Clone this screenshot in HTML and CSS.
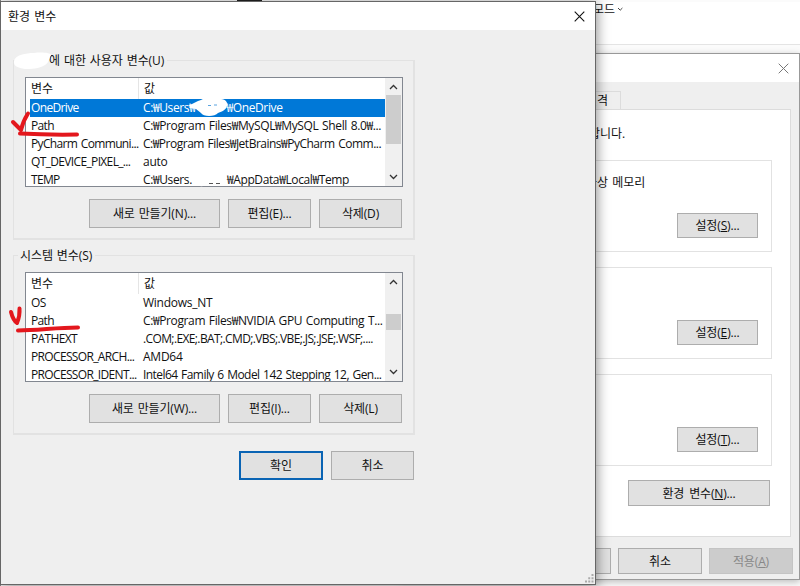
FILE: index.html
```
<!DOCTYPE html>
<html lang="ko">
<head>
    <meta charset="UTF-8">
    <title>환경 변수</title>
    <link rel="stylesheet" href="styles.css">
</head>
<body>
    <div class="desktop">
        <!-- App behind the dialogs -->
        <div class="backdrop">
            <div class="backdrop-mark"></div>
            <div class="backdrop-bar">
                <span>모드</span>
                <svg width="7" height="5" viewBox="0 0 7 5"><path d="M1 1l2.200 2.200L5.400 1" fill="none" stroke="#444"/></svg>
            </div>
        </div>

        <!-- System properties -->
        <div class="window props">
            <div class="props-title">
                <svg width="11" height="11" viewBox="0 0 11 11"><path d="M.7.7l9.600 9.600M10.300.7L.7 10.300" fill="none" stroke="#777"/></svg>
            </div>
            <div class="props-tabs"><div class="tab">원격</div></div>
            <div class="props-page">
                <p class="props-note">합니다.</p>
                <div class="props-group">
                    <p>가상 메모리</p>
                    <button class="btn">설정(<u>S</u>)...</button>
                </div>
                <div class="props-group">
                    <button class="btn">설정(<u>E</u>)...</button>
                </div>
                <div class="props-group">
                    <button class="btn">설정(<u>T</u>)...</button>
                </div>
                <button class="btn env-btn">환경 변수(<u>N</u>)...</button>
            </div>
            <div class="props-actions">
                <button class="btn"></button>
                <button class="btn">취소</button>
                <button class="btn disabled">적용(<u>A</u>)</button>
            </div>
        </div>

        <!-- Environment variables -->
        <div class="window env">
            <div class="env-title">
                <span>환경 변수</span>
                <svg width="11" height="11" viewBox="0 0 11 11"><path d="M.7.7l9.600 9.600M10.300.7L.7 10.300" fill="none" stroke="#111" stroke-width="1.100"/></svg>
            </div>
            <div class="env-body">
                <section class="group">
                    <h2 class="legend user">에 대한 사용자 변수(U)</h2>
                    <div class="list">
                        <div class="rows">
                            <div class="row head"><span>변수</span><span>값</span></div>
                            <div class="row selected"><span>OneDrive</span><span class="path">C:₩Users₩<i class="gap"></i>₩OneDrive</span></div>
                            <div class="row"><span>Path</span><span class="path">C:₩Program Files₩MySQL₩MySQL Shell 8.0₩...</span></div>
                            <div class="row"><span>PyCharm Communi...</span><span class="path jetbrains">C:₩Program Files₩JetBrains₩PyCharm Comm...</span></div>
                            <div class="row"><span>QT_DEVICE_PIXEL_...</span><span>auto</span></div>
                            <div class="row"><span>TEMP</span><span class="path">C:₩Users.<i class="gap temp"></i>₩AppData₩Local₩Temp</span></div>
                        </div>
                        <div class="scroll">
                            <svg width="9" height="6" viewBox="0 0 9 6"><path d="M1 5l3.500-3.500L8 5" fill="none" stroke="#333" stroke-width="1.300"/></svg>
                            <div class="track"><div class="thumb"></div></div>
                            <svg width="9" height="6" viewBox="0 0 9 6"><path d="M1 1l3.500 3.500L8 1" fill="none" stroke="#333" stroke-width="1.300"/></svg>
                        </div>
                    </div>
                    <div class="actions">
                        <button class="btn wide">새로 만들기(N)...</button>
                        <button class="btn">편집(E)...</button>
                        <button class="btn">삭제(D)</button>
                    </div>
                </section>

                <section class="group">
                    <h2 class="legend">시스템 변수(S)</h2>
                    <div class="list">
                        <div class="rows">
                            <div class="row head"><span>변수</span><span>값</span></div>
                            <div class="row"><span>OS</span><span>Windows_NT</span></div>
                            <div class="row"><span>Path</span><span class="path">C:₩Program Files₩NVIDIA GPU Computing T...</span></div>
                            <div class="row"><span>PATHEXT</span><span class="ext">.COM;.EXE;.BAT;.CMD;.VBS;.VBE;.JS;.JSE;.WSF;....</span></div>
                            <div class="row"><span>PROCESSOR_ARCH...</span><span>AMD64</span></div>
                            <div class="row"><span>PROCESSOR_IDENT...</span><span class="cpu">Intel64 Family 6 Model 142 Stepping 12, Gen...</span></div>
                        </div>
                        <div class="scroll">
                            <svg width="9" height="6" viewBox="0 0 9 6"><path d="M1 5l3.500-3.500L8 5" fill="none" stroke="#333" stroke-width="1.300"/></svg>
                            <div class="track"><div class="thumb low"></div></div>
                            <svg width="9" height="6" viewBox="0 0 9 6"><path d="M1 1l3.500 3.500L8 1" fill="none" stroke="#333" stroke-width="1.300"/></svg>
                        </div>
                    </div>
                    <div class="actions">
                        <button class="btn wide">새로 만들기(W)...</button>
                        <button class="btn">편집(I)...</button>
                        <button class="btn">삭제(L)</button>
                    </div>
                </section>

                <div class="dialog-actions">
                    <button class="btn default">확인</button>
                    <button class="btn">취소</button>
                </div>
            </div>
            <svg class="grip" width="9" height="9" viewBox="0 0 9 9" fill="#aaa"><path d="M6.500 0h2v2h-2zM3.250 3.250h2v2h-2zM6.500 3.250h2v2h-2zM0 6.500h2v2H0zM3.250 6.500h2v2h-2zM6.500 6.500h2v2h-2z"/></svg>
        </div>

        <!-- Pen marks -->
        <svg class="marks" width="800" height="586" viewBox="0 0 800 586">
            <g fill="#fff">
                <path d="M14 61c1-6 12-8 20-8 8-1 17 0 17 2-2 3-2 8-6 10-6 4-14 4-20 4-7-1-12-3-11-8z"/>
                <path d="M189 105c4-1 8-4 12-5 5-3 15-3 20-1 5 0 7 4 6 7-1 4-6 6-9 7-3 4-15 4-17 0l-5-4-6-1z"/>
                <path d="M193 177h32v8h-18q-8 3-11-2h-3z"/>
            </g>
            <path d="M208 105.500h3M214 105h3" stroke="#5aa4e0" fill="none"/>
            <path d="M209 183.500h4M216 183.500h4" stroke="#555" fill="none"/>
            <g fill="none" stroke="#e3171d" stroke-width="4" stroke-linecap="round" stroke-linejoin="round">
                <path d="M13 122l8 8q2-9 7-16.500"/>
                <path d="M20 133.500q28 1.500 57 1"/>
                <path d="M11 312q2 8 6 11 3-7 2.500-14.500"/>
                <path d="M18 330.500c20 0 38-3 60-3"/>
            </g>
        </svg>
    </div>
</body>
</html>
```
FILE: styles.css
```
* { margin: 0; padding: 0; box-sizing: border-box; }
body {
    font-family: "Open Sans", "Noto Sans CJK KR", sans-serif;
    font-size: 12px; color: #111; background: white; overflow: hidden;
}

.desktop { position: relative; width: 800px; height: 586px; overflow: hidden; background: #fff; }

.backdrop { height: 586px; border-left: 1px solid #888; background: #fbfbfb; }
.backdrop-mark { width: 25px; height: 2px; margin-left: 236px; background: #222; }
.backdrop-bar {
    height: 43px; padding: 0 0 0 592px; background: #fff;
    border-bottom: 1px solid #e4e4e4; line-height: 16px;
}
.backdrop-bar svg { margin-left: -1px; vertical-align: 2px; }

.window { position: absolute; background: #efefef; }

.btn {
    height: 29px; width: 84px; padding-top: 1px; border: 1px solid #adadad; background: #e1e1e1;
    font: inherit; color: inherit; letter-spacing: -0.15px; line-height: 1; white-space: nowrap;
}
.btn.wide { width: 131px; word-spacing: 1px; }
.btn.default { border: 2px solid #0a64b4; }
.btn.disabled { background: #ccc; border-color: #c4c4c4; color: #888; }

/* System properties */
.props {
    left: 400px; top: 53px; width: 400px; height: 527px;
    border: 1px solid #999; box-shadow: 0 2px 7px rgba(0, 0, 0, 0.25);
}
.props-title {
    height: 28px; padding-right: 10px; background: white;
    display: flex; align-items: center; justify-content: flex-end;
}
.props-tabs { height: 27px; padding-top: 9px; }
.tab {
    width: 120px; height: 18px; margin-left: 100px; padding-right: 12px;
    border: 1px solid #dcdcdc; border-bottom: 0; text-align: right; line-height: 17px;
}
.props-page {
    height: 428px; width: 382px; margin-left: 8px; padding: 13px 18px 0 0;
    background: white; border: 1px solid #dcdcdc;
    display: flex; flex-direction: column; align-items: flex-end;
}
.props-note { align-self: flex-start; height: 37px; padding-left: 179px; line-height: 21px; }
.props-group {
    width: 350px; height: 92px; margin-bottom: 15px; padding: 0 13px 13px 0; flex-shrink: 0;
    border: 1px solid #e2e2e2; display: flex; flex-direction: column; align-items: flex-end;
}
.props-group p { width: 172px; padding-top: 12px; line-height: 20px; word-spacing: 1px; }
.props-group .btn { width: 81px; height: 25px; margin-top: auto; }
.env-btn { width: 142px; height: 26px; margin: -1px 2px 0 0; flex-shrink: 0; word-spacing: 2px; }
.props-actions { display: flex; justify-content: flex-end; gap: 7px; padding: 11px 6px 0 0; }
.props-actions .btn { height: 26px; }

/* Environment variables */
.env {
    left: 0; top: 1px; width: 596px; height: 584px;
    border: 1px solid #666; box-shadow: 1px 2px 12px rgba(0, 0, 0, 0.45);
}
.env-title {
    height: 28px; padding: 0 10px 0 7px; background: white; word-spacing: 1px;
    display: flex; align-items: center; justify-content: space-between;
}
.env-body { width: 402px; margin-left: 12px; padding-top: 30px; }
.group { height: 180px; margin-bottom: 15px; padding: 0 11px; border: 2px solid #e2e2e2; border-width: 1px 2px 2px 1px; }
.legend {
    width: max-content; height: 18px; margin: -9px 0 7px -7px; padding: 0 3px 0 2px;
    background: #efefef; font-size: 12px; font-weight: normal; line-height: 18px; word-spacing: 1px;
    letter-spacing: -0.1px;
}
.legend.user { margin-left: 22px; }

.list {
    width: 378px; height: 110px; background: white; border: 1px solid #828790;
    display: flex; overflow: hidden;
}
.rows { flex: 1; padding-left: 4px; }
.row {
    height: 18px; display: flex; align-items: center;
    white-space: nowrap; line-height: 18px; letter-spacing: -0.25px; word-spacing: 1px;
}
.row span { padding-left: 1px; }
.row span:first-child { width: 112px; flex-shrink: 0; letter-spacing: -0.65px; }
.row.head { height: 21px; line-height: 21px; align-items: stretch; letter-spacing: 0; }
.row.head span:first-child { width: 109px; border-right: 1px solid #e5e5e5; letter-spacing: 0; }
.row.head span:last-child { padding-left: 5px; }
.row.selected { height: 18px; background: #0078d7; color: white; }
.row .path { letter-spacing: -0.38px; }
.row .jetbrains { letter-spacing: -0.5px; }
.row .cpu { letter-spacing: -0.56px; }
.row .ext { letter-spacing: -0.62px; }
.gap { display: inline-block; width: 31px; }
.gap.temp { width: 35px; }

.scroll {
    width: 17px; background: #f0f0f0; padding: 6px 1px;
    display: flex; flex-direction: column; align-items: center;
}
.track { flex: 1; width: 100%; padding-top: 5px; }
.thumb { height: 49px; background: #cdcdcd; }
.thumb.low { height: 16px; margin-top: 24px; }

.actions { display: flex; gap: 8px; margin-top: 12px; padding-left: 64px; }
.dialog-actions { display: flex; justify-content: flex-end; gap: 8px; padding: 1px 1px 0 0; }
.actions .btn:not(.wide), .dialog-actions .btn { width: 83px; }
.dialog-actions .btn.default { width: 84px; }

.grip { position: absolute; right: 1px; bottom: 1px; }

/* Drawn over both windows */
.marks { position: absolute; left: 0; top: 0; }
```
